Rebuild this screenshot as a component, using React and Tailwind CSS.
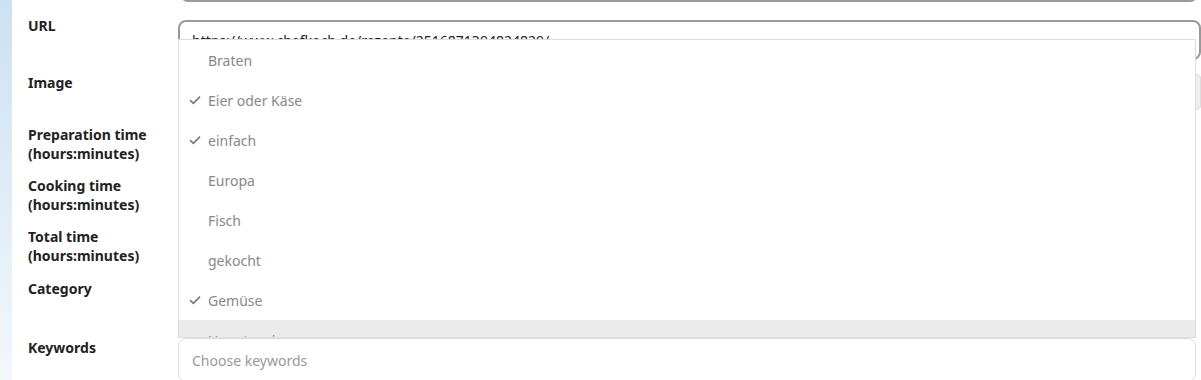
import React from "react";

const items = [
  { t: "Braten", c: false },
  { t: "Eier oder Käse", c: true },
  { t: "einfach", c: true },
  { t: "Europa", c: false },
  { t: "Fisch", c: false },
  { t: "gekocht", c: false },
  { t: "Gemüse", c: true },
  { t: "Hauptspeise", c: false, h: true },
];

function Check() {
  return (
    <svg width="12" height="10" viewBox="0 0 12 10" className="shrink-0">
      <path d="M1 5.2 L4.3 8.4 L11 1.6" fill="none" stroke="#7a7a7a" strokeWidth="1.7" />
    </svg>
  );
}

function Label({ children }) {
  return (
    <div className="w-[150px] shrink-0 text-[14px] leading-[19px] font-bold text-[#222]">{children}</div>
  );
}

export default function App() {
  return (
    <div className="flex h-[380px] w-[1201px] overflow-hidden bg-white" style={{ fontFamily: '"Noto Sans", "Open Sans", sans-serif' }}>
      <div className="w-3 shrink-0 bg-gradient-to-b from-[#cce1f1] to-[#f3f8fc]" />
      <div className="relative flex-1 pl-4">
        <div className="ml-[152px] -mt-[38px] h-10 w-[1018px] rounded-lg border-2 border-[#999]" />

        <div className="mt-[14px] flex">
          <Label>URL</Label>
          <div className="mt-1 flex h-10 flex-1 items-center overflow-hidden rounded-lg border-2 border-r-2 border-[#999] pl-[12px] text-[14px] text-[#222]">
            https://www.chefkoch.de/rezepte/2516871394824829/
          </div>
        </div>

        <div className="mt-[13px] flex h-[37px]">
          <Label>Image</Label>
          <div className="flex flex-1 justify-end">
            <div className="mt-px h-9 w-6 rounded border border-[#ddd] bg-[#eee]" />
          </div>
        </div>

        <div className="mt-[15px] flex h-[38px]">
          <Label>Preparation time<br />(hours:minutes)</Label>
        </div>
        <div className="mt-[13px] flex h-[38px]">
          <Label>Cooking time<br />(hours:minutes)</Label>
        </div>
        <div className="mt-[13px] flex h-[38px]">
          <Label>Total time<br />(hours:minutes)</Label>
        </div>
        <div className="mt-[14px] flex h-[45px]">
          <Label>Category</Label>
        </div>

        <div className="mt-[14px] flex">
          <Label>Keywords</Label>
          <div className="flex h-[44px] w-[1018px] items-center rounded-lg border border-[#ddd] pl-[13px] text-[14px] text-[#999]">
            Choose keywords
          </div>
        </div>

        <div className="absolute left-[166px] top-[39px] h-[299px] w-[1018px] overflow-hidden border border-[#ddd] bg-white">
          {items.map((it) => (
            <div
              key={it.t}
              className={`flex h-10 items-center pl-[10px] text-[14px] text-[#888] ${it.h ? "bg-[#ebebeb]" : ""}`}
            >
              <div className="w-[19px]">{it.c && <Check />}</div>
              <span>{it.t}</span>
            </div>
          ))}
        </div>
      </div>
    </div>
  );
}
